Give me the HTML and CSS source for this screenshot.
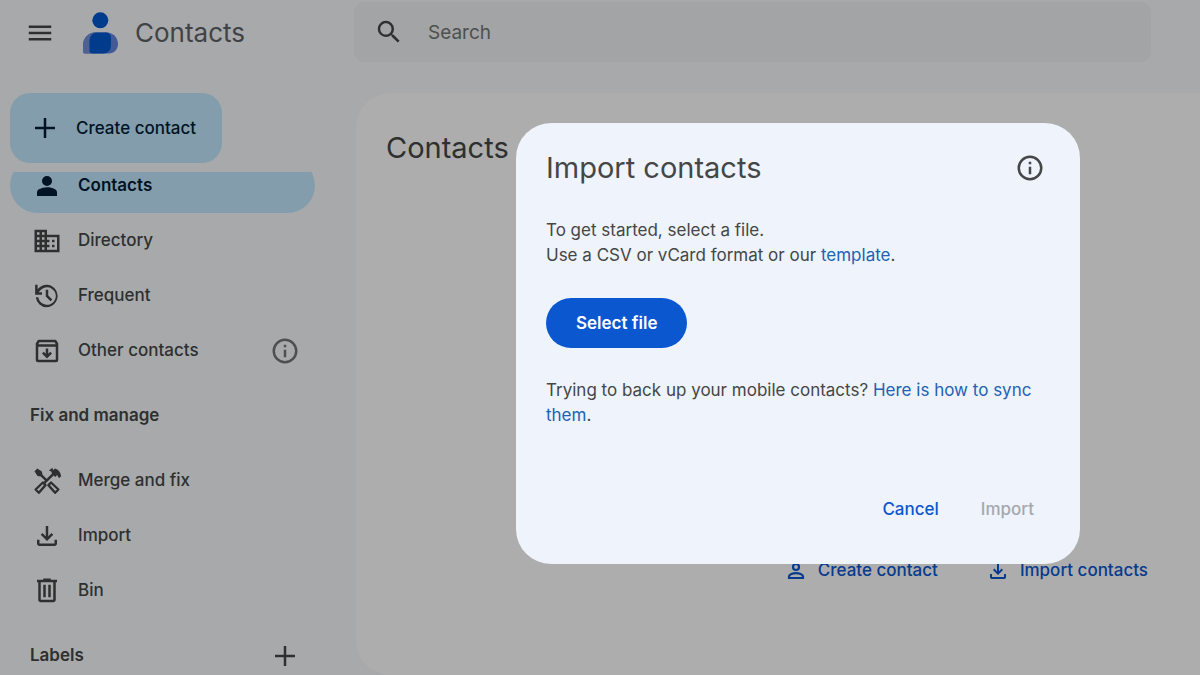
FILE: index.html
```
<!DOCTYPE html>
<html lang="en">
<head>
  <meta charset="UTF-8">
  <meta name="viewport" content="width=device-width, initial-scale=1">
  <title>Contacts</title>
  <link rel="stylesheet" href="styles.css">
</head>

<body>
  <!-- Shared icons -->
  <svg class="icon-defs" aria-hidden="true">
    <symbol id="i-info" viewBox="0 0 24 24">
      <circle cx="12" cy="12" r="9" fill="none" stroke="currentColor" stroke-width="2"/>
      <path d="M11 7h2v2h-2zM11 11h2v6h-2z"/>
    </symbol>
    <symbol id="i-plus" viewBox="0 0 24 24">
      <path d="M11 4h2v7h7v2h-7v7h-2v-7H4v-2h7z"/>
    </symbol>
    <symbol id="i-download" viewBox="0 0 24 24">
      <path d="M12 16l-5-5 1.400-1.450 2.600 2.600V4h2v8.150l2.600-2.600L17 11zM6 20c-.55 0-1.020-.2-1.410-.59A1.930 1.930 0 0 1 4 18v-3h2v3h12v-3h2v3c0 .55-.2 1.020-.59 1.410-.39.39-.86.59-1.410.59z"/>
    </symbol>
  </svg>

  <!-- Top bar -->
  <header class="topbar">
    <div class="brand">
      <button class="icon-btn" type="button" aria-label="Main menu">
        <svg class="icon" viewBox="0 0 24 24"><path d="M3 6h18v2H3zM3 11h18v2H3zM3 16h18v2H3z"/></svg>
      </button>
      <svg class="logo" viewBox="0 0 36 42" aria-hidden="true">
        <path d="M12 20.500h12c6 0 11 5 11 11.500 0 5.500-4 9.500-9 9.500H2a2 2 0 0 1-2-2V33a12.500 12.500 0 0 1 12-12.500z" fill="#6384e0"/>
        <path d="M10 20.500h6c-6 1-9.500 4.500-9.500 10V38a3.500 3.500 0 0 0 3.500 3.500H2a2 2 0 0 1-2-2V33a12.500 12.500 0 0 1 10-12.500z" fill="#7590d8"/>
        <path d="M14 20.500h9a5 5 0 0 1 5 5V34a7.500 7.500 0 0 1-7.500 7.500H9.500a3 3 0 0 1-3-3V28a7.500 7.500 0 0 1 7.500-7.500z" fill="#0057cf"/>
        <circle cx="17.300" cy="8.300" r="8" fill="#0057cf"/>
      </svg>
      <span class="brand-name">Contacts</span>
    </div>
    <label class="search">
      <svg class="icon" viewBox="0 0 24 24" aria-hidden="true"><path d="M15.500 14h-.79l-.28-.27A6.470 6.470 0 0 0 16 9.500 6.500 6.500 0 1 0 9.500 16c1.610 0 3.090-.59 4.230-1.570l.27.28v.79l5 4.990L20.490 19zm-6 0C7.010 14 5 11.990 5 9.500S7.010 5 9.500 5 14 7.010 14 9.500 11.990 14 9.500 14z"/></svg>
      <input type="search" placeholder="Search" aria-label="Search">
    </label>
  </header>

  <div class="layout">
    <!-- Sidebar -->
    <aside class="sidebar">
      <button class="create-btn" type="button">
        <svg class="icon" aria-hidden="true"><use href="#i-plus"/></svg>
        Create contact
      </button>

      <div class="nav-scroll">
        <nav class="nav">
          <a class="nav-item active" href="#contacts">
            <svg class="icon" viewBox="0 0 24 24" aria-hidden="true"><path d="M12 12a4 4 0 1 0 0-8 4 4 0 0 0 0 8zM4 20v-2.800c0-.57.150-1.090.44-1.560.29-.48.68-.84 1.160-1.090A14.800 14.800 0 0 1 12 13c2.200 0 4.340.52 6.400 1.550.48.250.87.610 1.160 1.090.29.470.44.990.44 1.560V20z"/></svg>
            Contacts
          </a>
          <a class="nav-item" href="#directory">
            <svg class="icon" viewBox="0 0 24 24" aria-hidden="true"><path d="M12 7V3H2v18h20V7H12zM6 19H4v-2h2v2zm0-4H4v-2h2v2zm0-4H4V9h2v2zm0-4H4V5h2v2zm4 12H8v-2h2v2zm0-4H8v-2h2v2zm0-4H8V9h2v2zm0-4H8V5h2v2zm10 12h-8v-2h2v-2h-2v-2h2v-2h-2V9h8v10zm-2-8h-2v2h2v-2zm0 4h-2v2h2v-2z"/></svg>
            Directory
          </a>
          <a class="nav-item" href="#frequent">
            <svg class="icon" viewBox="0 0 24 24" aria-hidden="true"><path d="M12 21a8.700 8.700 0 0 1-6.010-2.290A8.700 8.700 0 0 1 3.050 13H5.100a7 7 0 1 0 1.700-5.600L5.250 9H8v2H2.500V3h2v3.350A9 9 0 1 1 12 21zm2.800-4.800L11 12.400V7h2v4.600l3.200 3.200z" /></svg>
            Frequent
          </a>
          <div class="nav-row">
            <a class="nav-item" href="#other">
              <svg class="icon" viewBox="0 0 24 24" aria-hidden="true">
                <path d="M4 6.200V19a1 1 0 0 0 1 1h14a1 1 0 0 0 1-1V6.200L18.600 4H5.400zM4 7.500h16" fill="none" stroke="currentColor" stroke-width="2" stroke-linejoin="round"/>
                <path d="M12 18l-4-4 1.400-1.400 1.600 1.600V10h2v4.200l1.600-1.600L16 14z"/>
              </svg>
              Other contacts
            </a>
            <button class="icon-btn muted" type="button" aria-label="About other contacts">
              <svg class="icon"><use href="#i-info"/></svg>
            </button>
          </div>

          <h2 class="nav-heading">Fix and manage</h2>
          <a class="nav-item" href="#merge">
            <svg class="icon" viewBox="0 0 24 24" aria-hidden="true">
              <path d="M2 4.200L4.300 2l3.600 2.300.5 2.600 3.900 3.900-1.400 1.400L7 8.400l-2.600-.5z"/>
              <path d="M13.500 3.600L16.300 1.400l.5 2 1.500-1.500c2.700.6 4.700 3 5 6.300l-1.700 1.500-1.500-2.500-1.500 1.600-1.300-1.300-6.700 6.700-1.400-1.400 6.800-6.800-.6-1.600z"/>
              <path d="M8.700 13.200l2.100 2.100-5.300 6.100-2.600-2.600zM15.200 13.200l-2.100 2.100 5.400 6.100 2.600-2.600z" fill="none" stroke="currentColor" stroke-width="1.900" stroke-linejoin="round"/>
            </svg>
            Merge and fix
          </a>
          <a class="nav-item" href="#import">
            <svg class="icon" aria-hidden="true"><use href="#i-download"/></svg>
            Import
          </a>
          <a class="nav-item" href="#bin">
            <svg class="icon" viewBox="0 0 24 24" aria-hidden="true"><path d="M7 21c-.55 0-1.020-.2-1.410-.59A1.930 1.930 0 0 1 5 19V5H4V3h5V2h6v1h5v2h-1v14c0 .55-.2 1.020-.59 1.410-.39.39-.86.59-1.410.59zM17 5H7v14h10zM9 17h2V7H9zm4 0h2V7h-2z"/></svg>
            Bin
          </a>

          <div class="nav-row">
            <h2 class="nav-heading">Labels</h2>
            <button class="icon-btn" type="button" aria-label="Create label">
              <svg class="icon"><use href="#i-plus"/></svg>
            </button>
          </div>
        </nav>
      </div>
    </aside>

    <!-- Contact list (empty) -->
    <main class="content">
      <h1>Contacts</h1>
      <div class="empty-actions">
        <button class="text-btn" type="button">
          <svg class="icon-sm" viewBox="0 0 24 24" aria-hidden="true">
            <circle cx="12" cy="8" r="3" fill="none" stroke="currentColor" stroke-width="2.200"/>
            <path d="M5 19v-1.600c0-1.900 4-3.200 7-3.200s7 1.300 7 3.200V19z" fill="none" stroke="currentColor" stroke-width="2.200"/>
          </svg>
          Create contact
        </button>
        <button class="text-btn" type="button">
          <svg class="icon-sm" aria-hidden="true"><use href="#i-download"/></svg>
          Import contacts
        </button>
      </div>
    </main>
  </div>

  <!-- Import dialog -->
  <div class="scrim">
    <div class="dialog" role="dialog" aria-modal="true" aria-labelledby="dialog-title">
      <div class="dialog-head">
        <h2 id="dialog-title">Import contacts</h2>
        <button class="icon-btn" type="button" aria-label="More information">
          <svg class="icon"><use href="#i-info"/></svg>
        </button>
      </div>
      <p>To get started, select a file.<br>Use a CSV or vCard format or our <a href="#template">template</a>.</p>
      <button class="select-btn" type="button">Select file</button>
      <p>Trying to back up your mobile contacts? <a href="#sync">Here is how to sync them</a>.</p>
      <div class="dialog-actions">
        <button class="action-btn" type="button">Cancel</button>
        <button class="action-btn" type="button" disabled>Import</button>
      </div>
    </div>
  </div>
</body>
</html>
```

FILE: styles.css
```
/* Base reset */
* {
  margin: 0;
  padding: 0;
  box-sizing: border-box;
}
body {
  min-height: 100vh;
  display: flex;
  flex-direction: column;
  font-family: Inter, "Liberation Sans", sans-serif;
  font-size: 17px;
  line-height: 25px;
  color: #444746;
  background: #f8fafd;
}
a {
  color: inherit;
  text-decoration: none;
}
button,
input {
  font: inherit;
  color: inherit;
  border: none;
  background: none;
}
button {
  cursor: pointer;
}

/* Icons */
.icon-defs {
  display: none;
}
.icon,
.icon-sm {
  display: block;
  flex: none;
  width: 30px;
  height: 30px;
  fill: currentColor;
}
.icon-sm {
  width: 24px;
  height: 24px;
}
.icon-btn {
  flex: none;
}
.muted {
  color: #747775;
}

/* Top bar */
.topbar {
  display: flex;
  padding: 2px 49px 0 0;
}
.brand {
  flex: none;
  width: 354px;
  height: 62px;
  padding-left: 25px;
  display: flex;
  align-items: center;
}
.logo {
  width: 36px;
  height: 42px;
  margin-left: 28px;
}
.brand-name {
  margin-left: 16px;
  font-size: 26px;
  line-height: 30px;
  color: #5f6368;
}
.search {
  flex: 1;
  height: 60px;
  padding: 0 20px;
  display: flex;
  align-items: center;
  gap: 24px;
  border-radius: 10px;
  background: #f0f2f4;
}
.search input {
  flex: 1;
  min-width: 0;
  font-size: 19px;
  outline: none;
}
.search input::placeholder {
  color: #747775;
  opacity: 1;
}

/* Page layout */
.layout {
  flex: 1;
  display: flex;
  padding-top: 29px;
}
.sidebar {
  flex: none;
  width: 356px;
  height: calc(100vh - 93px);
  padding: 0 41px 0 10px;
  display: flex;
  flex-direction: column;
  gap: 9px;
}

/* Sidebar */
.create-btn {
  flex: none;
  align-self: flex-start;
  height: 70px;
  padding: 0 26px 0 20px;
  display: flex;
  align-items: center;
  gap: 16px;
  border-radius: 20px;
  font-weight: 500;
  color: #001d35;
  background: #c2e7ff;
}
.nav-scroll {
  flex: 1;
  min-height: 0;
  overflow: hidden;
}
/* list is scrolled slightly under the create button */
.nav {
  margin-top: -14px;
}
.nav-item {
  height: 55px;
  padding-left: 22px;
  display: flex;
  align-items: center;
  gap: 16px;
  border-radius: 28px;
  font-weight: 500;
}
.nav-item.active {
  font-weight: 600;
  color: #001d35;
  background: #c2e7ff;
}
.nav-row {
  display: flex;
  align-items: center;
  justify-content: space-between;
  padding-right: 15px;
}
.nav-heading {
  padding: 25px 20px;
  font-size: 17px;
  font-weight: 600;
}

/* Main card */
.content {
  flex: 1;
  padding: 35px 52px 92px 30px;
  display: flex;
  flex-direction: column;
  justify-content: space-between;
  border-radius: 35px 0 0 35px;
  background: #fff;
}
.content h1 {
  font-size: 29px;
  font-weight: 400;
  line-height: 40px;
}
.empty-actions {
  display: flex;
  justify-content: flex-end;
  gap: 48px;
}
.text-btn {
  display: flex;
  align-items: center;
  gap: 10px;
  font-weight: 500;
  color: #0b57d0;
}

/* Dialog */
.scrim {
  position: fixed;
  inset: 0;
  display: flex;
  align-items: flex-start;
  justify-content: flex-end;
  padding: 123px 120px 0 20px;
  background: rgba(0, 0, 0, 0.32);
}
.dialog {
  width: 100%;
  max-width: 564px;
  padding: 25px 30px 30px;
  border-radius: 35px;
  background: #eef3fc;
}
.dialog-head {
  display: flex;
  align-items: center;
  justify-content: space-between;
  padding-right: 5px;
  margin-bottom: 30px;
}
.dialog h2 {
  font-size: 29px;
  font-weight: 400;
  line-height: 40px;
}
.dialog a {
  color: #2262b4;
}
.select-btn {
  height: 50px;
  margin: 30px 0;
  padding: 0 30px;
  display: block;
  border-radius: 25px;
  font-weight: 600;
  color: #fff;
  background: #0b57d0;
}
.dialog-actions {
  display: flex;
  justify-content: flex-end;
  gap: 10px;
  margin-top: 56px;
}
.action-btn {
  height: 50px;
  padding: 0 16px;
  font-weight: 500;
  color: #0b57d0;
}
.action-btn:disabled {
  color: #a5a8ad;
  cursor: default;
}
```
